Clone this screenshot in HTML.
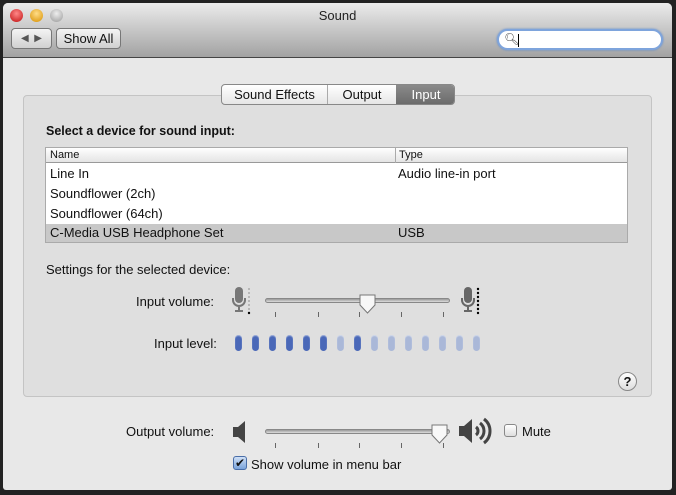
<!DOCTYPE html>
<html><head><style>
*{margin:0;padding:0;box-sizing:border-box}
body{width:676px;height:495px;background:#222;position:relative;overflow:hidden;font-family:"Liberation Sans",sans-serif;font-size:13px;color:#111}
.win{position:absolute;left:3px;top:3px;width:669px;height:487px;background:#e8e8e8;border-radius:5px 5px 3px 3px;overflow:hidden}
.tb{position:absolute;left:0;top:0;width:100%;height:55px;background:linear-gradient(#ebebeb,#a2a2a2);border-bottom:1px solid #444}
.dot{position:absolute;top:6px;width:13px;height:13px;border-radius:50%}
.title{position:absolute;top:5px;width:100%;text-align:center;font-size:13px;color:#222}
.btn{position:absolute;background:linear-gradient(#f4f4f4,#d0d0d0);border:1px solid #777;border-radius:4px;font-size:13px;text-align:center}
.abs{position:absolute}
.group{position:absolute;left:20px;top:92px;width:629px;height:302px;background:#dfdfdf;border:1px solid #c4c4c4;border-radius:4px}
.table{position:absolute;left:42px;top:144px;width:583px;height:96px;background:#fff;border:1px solid #aaa}
.row{position:absolute;left:0;width:100%;height:20px;line-height:20px;font-size:13px}
.row span{position:absolute}
.lvl{position:absolute;top:332px;width:7px;height:16px;border-radius:3.5px;box-shadow:inset 0 1px 1px rgba(255,255,255,.5)}
.tick{position:absolute;width:1px;height:5px;background:#666}
</style></head><body>
<div class="win">
<div class="tb">
 <div class="dot" style="left:7px;background:radial-gradient(circle at 50% 35%,#f88,#c01010)"></div>
 <div class="dot" style="left:27px;background:radial-gradient(circle at 50% 35%,#fd8,#d89000)"></div>
 <div class="dot" style="left:47px;background:radial-gradient(circle at 50% 35%,#eee,#999)"></div>
 <div class="title">Sound</div>
 <div class="btn" style="left:8px;top:25px;width:41px;height:21px;font-size:10px;line-height:19px;color:#555">◀ &nbsp;▶</div>
 <div class="btn" style="left:53px;top:25px;width:65px;height:21px;line-height:19px">Show All</div>
 <div class="abs" style="left:494px;top:26px;width:166px;height:21px;background:#fff;border:2px solid #7ea4dc;border-radius:11px;box-shadow:0 0 2px #5a8ad0"><span style="position:absolute;left:5px;top:1px;font-size:12px;color:#444">&#x1F50D;&#xFE0E;</span><span style="position:absolute;left:19px;top:3px;width:1px;height:13px;background:#000"></span></div>
</div>
<div class="group"></div>
<div class="abs" style="left:218px;top:81px;width:234px;height:21px;background:linear-gradient(#fff,#e6e6e6);border:1px solid #888;border-radius:4px;overflow:hidden">
 <div class="abs" style="left:0;top:0;width:106px;height:20px;line-height:20px;text-align:center;border-right:1px solid #aaa">Sound Effects</div>
 <div class="abs" style="left:106px;top:0;width:68px;height:20px;line-height:20px;text-align:center">Output</div>
 <div class="abs" style="left:174px;top:0;width:60px;height:20px;line-height:20px;text-align:center;background:linear-gradient(#8a8a8a,#6a6a6a);color:#fff">Input</div>
</div>
<div class="abs" style="left:43px;top:121px;font-weight:bold;font-size:12.5px">Select a device for sound input:</div>
<div class="table">
 <div class="row" style="top:0;height:15px;line-height:15px;font-size:11px;background:linear-gradient(#fff,#e4e4e4);border-bottom:1px solid #999"><span style="left:4px">Name</span><span style="left:349px;border-left:1px solid #aaa;padding-left:3px">Type</span></div>
 <div class="row" style="top:16px"><span style="left:4px">Line In</span><span style="left:352px">Audio line-in port</span></div>
 <div class="row" style="top:36px"><span style="left:4px">Soundflower (2ch)</span></div>
 <div class="row" style="top:56px"><span style="left:4px">Soundflower (64ch)</span></div>
 <div class="row" style="top:76px;height:18px;line-height:18px;background:#c8c8c8"><span style="left:4px">C-Media USB Headphone Set</span><span style="left:352px">USB</span></div>
</div>
<div class="abs" style="left:43px;top:259px">Settings for the selected device:</div>
<div class="abs" style="left:133px;top:291px">Input volume:</div>
<svg class="abs" style="left:229px;top:283px" width="20" height="30"><rect x="3" y="1" width="8" height="16" rx="4" fill="#777"/><path d="M1 12v2a6 6 0 0 0 12 0v-2M7 20v5M3 25h8" stroke="#777" stroke-width="2" fill="none"/><g fill="#aaa"><circle cx="17" cy="3" r="1"/><circle cx="17" cy="7" r="1"/><circle cx="17" cy="11" r="1"/><circle cx="17" cy="15" r="1"/><circle cx="17" cy="19" r="1"/><circle cx="17" cy="23" r="1"/></g><circle cx="17" cy="27" r="1.2" fill="#000"/></svg>
<div class="abs" style="left:262px;top:295px;width:185px;height:5px;border-radius:3px;background:linear-gradient(#999,#ddd);border:1px solid #888"></div>
<div class="tick" style="left:272px;top:309px"></div><div class="tick" style="left:315px;top:309px"></div><div class="tick" style="left:356px;top:309px"></div><div class="tick" style="left:398px;top:309px"></div><div class="tick" style="left:440px;top:309px"></div>
<svg class="abs" style="left:355px;top:291px" width="20" height="22"><path d="M2 1h15v10l-7.5 8L2 11z" fill="#f8f8f8" stroke="#777"/></svg>
<svg class="abs" style="left:458px;top:283px" width="22" height="30"><rect x="3" y="1" width="8" height="16" rx="4" fill="#666"/><path d="M1 12v2a6 6 0 0 0 12 0v-2M7 20v5M3 25h8" stroke="#666" stroke-width="2" fill="none"/><g fill="#000"><circle cx="17" cy="3" r="1.2"/><circle cx="17" cy="7" r="1.2"/><circle cx="17" cy="11" r="1.2"/><circle cx="17" cy="15" r="1.2"/><circle cx="17" cy="19" r="1.2"/><circle cx="17" cy="23" r="1.2"/><circle cx="17" cy="27" r="1.2"/></g></svg>
<div class="abs" style="left:151px;top:333px">Input level:</div>
<div class="lvl" style="left:232px;background:#4a68b8"></div><div class="lvl" style="left:249px;background:#4a68b8"></div><div class="lvl" style="left:266px;background:#4a68b8"></div><div class="lvl" style="left:283px;background:#4a68b8"></div><div class="lvl" style="left:300px;background:#4a68b8"></div><div class="lvl" style="left:317px;background:#4a68b8"></div><div class="lvl" style="left:334px;background:#aab8d8"></div><div class="lvl" style="left:351px;background:#4a68b8"></div><div class="lvl" style="left:368px;background:#aab8d8"></div><div class="lvl" style="left:385px;background:#aab8d8"></div><div class="lvl" style="left:402px;background:#aab8d8"></div><div class="lvl" style="left:419px;background:#aab8d8"></div><div class="lvl" style="left:436px;background:#aab8d8"></div><div class="lvl" style="left:453px;background:#aab8d8"></div><div class="lvl" style="left:470px;background:#aab8d8"></div>
<div class="abs" style="left:615px;top:369px;width:19px;height:19px;border-radius:50%;background:linear-gradient(#fff,#ddd);border:1px solid #888;text-align:center;line-height:17px;font-weight:bold;font-size:13px">?</div>
<div class="abs" style="left:123px;top:421px">Output volume:</div>
<svg class="abs" style="left:230px;top:418px" width="14" height="22"><path d="M0 6h5l7-6v22l-7-6H0z" fill="#444"/></svg>
<div class="abs" style="left:262px;top:426px;width:185px;height:5px;border-radius:3px;background:linear-gradient(#999,#ddd);border:1px solid #888"></div>
<div class="tick" style="left:272px;top:440px"></div><div class="tick" style="left:315px;top:440px"></div><div class="tick" style="left:356px;top:440px"></div><div class="tick" style="left:398px;top:440px"></div><div class="tick" style="left:440px;top:440px"></div>
<svg class="abs" style="left:427px;top:421px" width="20" height="22"><path d="M2 1h15v10l-7.5 8L2 11z" fill="#f8f8f8" stroke="#777"/></svg>
<svg class="abs" style="left:456px;top:413px" width="36" height="30"><path d="M0 10h5l8-7v24l-8-7H0z" fill="#444"/><path d="M17 11a5 5 0 0 1 0 8M21 7a10 10 0 0 1 0 16M25 3a15 15 0 0 1 0 24" stroke="#444" stroke-width="3" fill="none"/></svg>
<div class="abs" style="left:501px;top:421px;width:13px;height:13px;border:1px solid #888;border-radius:3px;background:linear-gradient(#fff,#ddd)"></div>
<div class="abs" style="left:519px;top:421px">Mute</div>
<div class="abs" style="left:230px;top:453px;width:14px;height:14px;border:1px solid #4a6ea8;border-radius:3px;background:linear-gradient(#cfe0f6,#7aa4da);font-size:12px;line-height:12px;text-align:center">✔</div>
<div class="abs" style="left:248px;top:454px">Show volume in menu bar</div>
</div>
</body></html>
